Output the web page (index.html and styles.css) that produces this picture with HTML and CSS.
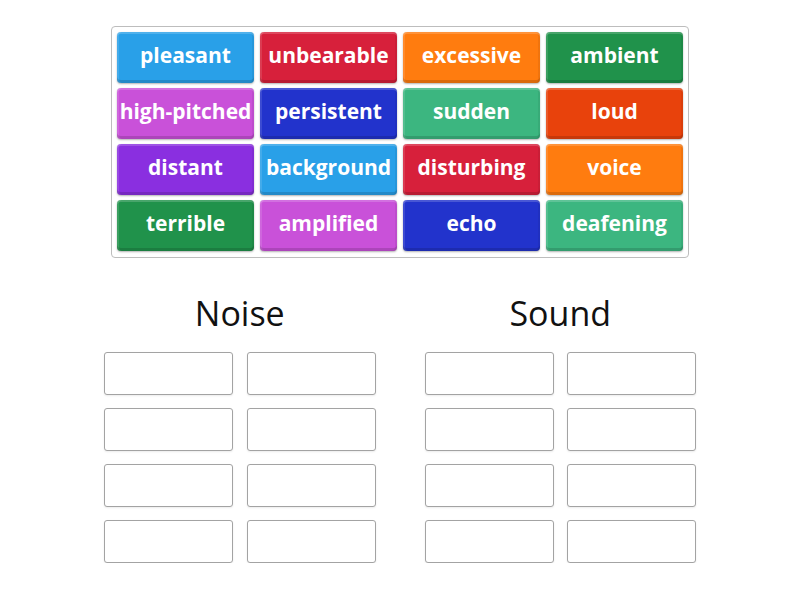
FILE: index.html
```html
<!DOCTYPE html>
<html>
<head>
<meta charset="utf-8">
<link rel="stylesheet" href="styles.css">
</head>
<body>
<div class="bank">
  <div class="tile c-blue">pleasant</div>
  <div class="tile c-red">unbearable</div>
  <div class="tile c-orange">excessive</div>
  <div class="tile c-green">ambient</div>
  <div class="tile c-magenta">high-pitched</div>
  <div class="tile c-navy">persistent</div>
  <div class="tile c-teal">sudden</div>
  <div class="tile c-vermilion">loud</div>
  <div class="tile c-purple">distant</div>
  <div class="tile c-blue">background</div>
  <div class="tile c-red">disturbing</div>
  <div class="tile c-orange">voice</div>
  <div class="tile c-green">terrible</div>
  <div class="tile c-magenta">amplified</div>
  <div class="tile c-navy">echo</div>
  <div class="tile c-teal">deafening</div>
</div>
<div class="groups">
  <div class="group">
    <h2 class="group-title">Noise</h2>
    <div class="slots">
      <div class="slot"></div><div class="slot"></div>
      <div class="slot"></div><div class="slot"></div>
      <div class="slot"></div><div class="slot"></div>
      <div class="slot"></div><div class="slot"></div>
    </div>
  </div>
  <div class="group">
    <h2 class="group-title">Sound</h2>
    <div class="slots">
      <div class="slot"></div><div class="slot"></div>
      <div class="slot"></div><div class="slot"></div>
      <div class="slot"></div><div class="slot"></div>
      <div class="slot"></div><div class="slot"></div>
    </div>
  </div>
</div>
</body>
</html>
```
FILE: styles.css
```css
html, body {
  margin: 0;
  padding: 0;
  background: #ffffff;
  font-family: "Open Sans", "Liberation Sans", sans-serif;
}

.bank {
  box-sizing: border-box;
  width: 578px;
  margin: 26px auto 0;
  padding: 5px 5px 6px;
  border: 1px solid #bdbdbd;
  border-radius: 4px;
  display: grid;
  grid-template-columns: repeat(4, 137px);
  grid-auto-rows: 51px;
  column-gap: 6px;
  row-gap: 5px;
}

.tile {
  display: flex;
  align-items: center;
  justify-content: center;
  border-radius: 4px;
  color: #ffffff;
  font-weight: 700;
  font-size: 21px;
  white-space: nowrap;
  padding-bottom: 5px;
  box-sizing: border-box;
  box-shadow:
    0 1px 2px rgba(0, 0, 0, 0.3),
    inset 0 -3px 0 rgba(0, 0, 0, 0.14),
    inset 0 2px 0 rgba(255, 255, 255, 0.18),
    inset 2px 0 0 rgba(255, 255, 255, 0.12),
    inset -2px 0 0 rgba(0, 0, 0, 0.06);
}

.c-blue { background: #29a0e8; }
.c-red { background: #d7203b; }
.c-orange { background: #ff7c0f; }
.c-green { background: #20924b; }
.c-magenta { background: #c951d9; }
.c-navy { background: #2233cc; }
.c-teal { background: #3cb680; }
.c-vermilion { background: #e8420c; }
.c-purple { background: #8a2fe0; }

.groups {
  width: 592px;
  margin: 32px auto 0;
  display: flex;
  gap: 49px;
}

.group {
  flex: 1;
}

.group-title {
  margin: 0 0 16px;
  text-align: center;
  font-weight: 400;
  font-size: 34px;
  line-height: 46px;
  color: #111111;
}

.slots {
  display: grid;
  grid-template-columns: 129px 129px;
  justify-content: space-between;
  grid-auto-rows: 43px;
  row-gap: 13px;
}

.slot {
  box-sizing: border-box;
  border: 1px solid #a3a3a3;
  border-radius: 3px;
  background: #ffffff;
  box-shadow: 0 1px 2px rgba(0, 0, 0, 0.08);
}
```
